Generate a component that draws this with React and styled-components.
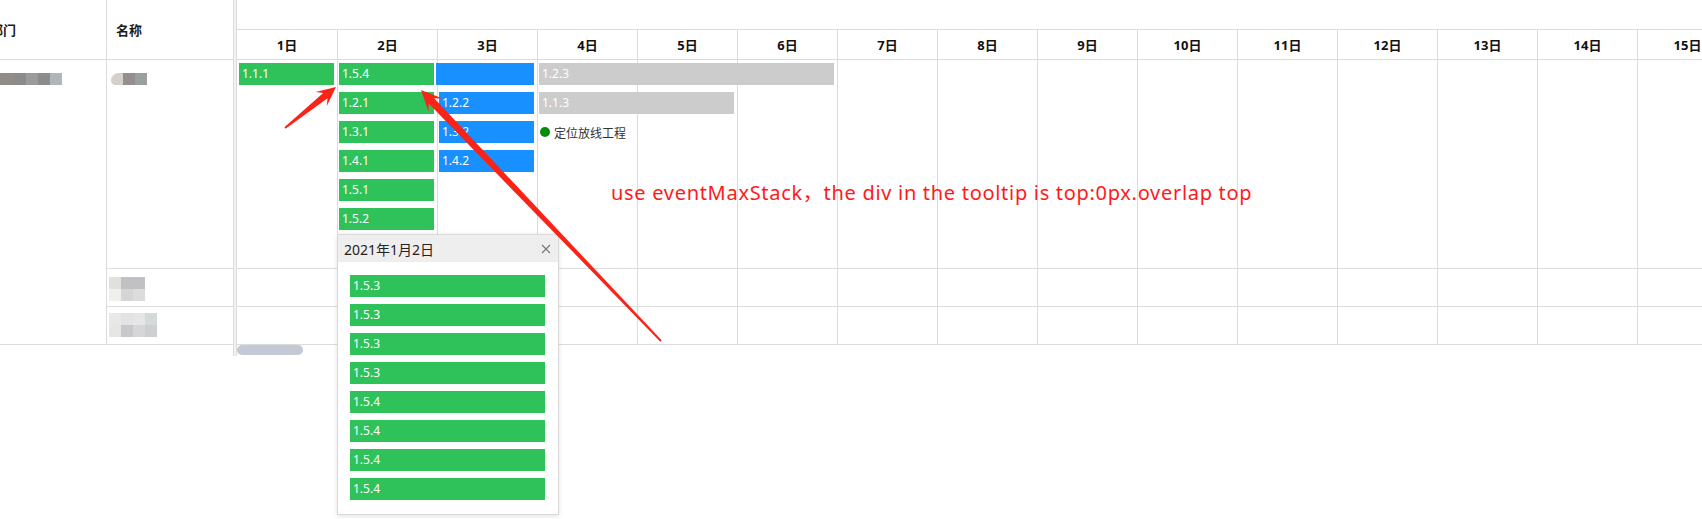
import React from "react";
import styled, { createGlobalStyle } from "styled-components";

const LINE = "#dcdcdc";
const GREEN = "#2fc25b";
const BLUE = "#1890ff";
const GRAY = "#cccccc";

const GlobalStyle = createGlobalStyle`
  html, body { margin: 0; padding: 0; background: #fff; }
  body { font-family: "Noto Sans", "Noto Sans CJK SC", sans-serif; color: #333; }
  *, *::before, *::after { box-sizing: border-box; }
`;

const Page = styled.div`
  position: relative;
  width: 1702px;
  height: 519px;
  overflow: hidden;
  background: #fff;
`;

const Table = styled.div`
  display: flex;
  align-items: flex-start;
`;

const LeftPanel = styled.div`
  flex: none;
  margin-left: -19px;
  display: grid;
  grid-template-columns: 126px 126px;
  grid-template-rows: 60px 209px 38px 38px;
`;

const LeftCell = styled.div`
  border-bottom: 1px solid ${LINE};
  border-right: ${(p) => (p.$last ? "none" : `1px solid ${LINE}`)};
`;

const HeadCell = styled(LeftCell)`
  display: flex;
  align-items: center;
  padding-left: 9px;
  font-size: 13px;
  font-weight: 700;
  color: #1a1a1a;
  font-family: "Noto Sans CJK SC", sans-serif;
`;

const DeptCell = styled(LeftCell)`
  grid-row: 2 / span 3;
  grid-column: 1;
  padding: 13px 0 0 9px;
`;

const NameCell = styled(LeftCell)`
  grid-column: 2;
  display: flex;
  align-items: flex-start;
  padding: ${(p) => p.$pad};
`;

const Mosaic = styled.div`
  display: grid;
  grid-template-columns: repeat(${(p) => p.$cols}, 12px);
  grid-auto-rows: 12px;
  filter: blur(0.3px);
`;

const Block = styled.span`
  background: ${(p) => p.$c};
  border-top-left-radius: ${(p) => (p.$round ? "10px" : "0")};
  border-bottom-left-radius: ${(p) => (p.$round ? "6px" : "0")};
`;

const Separator = styled.div`
  flex: none;
  width: 4px;
  height: 356px;
  border-left: 1px solid ${LINE};
  border-right: 1px solid ${LINE};
  background: #f1f1f1;
`;

const RightPanel = styled.div`
  flex: 1;
  min-width: 0;
  overflow: hidden;
`;

const MonthRow = styled.div`
  height: 30px;
  border-bottom: 1px solid ${LINE};
`;

const DayGrid = styled.div`
  position: relative;
  display: grid;
  grid-template-columns: repeat(15, 100px);
  height: ${(p) => p.$h}px;
  border-bottom: 1px solid ${LINE};
`;

const DayCell = styled.div`
  border-left: 1px solid ${LINE};
  &:first-child {
    border-left: none;
  }
`;

const DayHead = styled(DayCell)`
  display: flex;
  align-items: center;
  justify-content: center;
  font-size: 13px;
  font-weight: 700;
  color: #111;
  font-family: "Noto Sans", "Noto Sans CJK SC", sans-serif;
`;

const EventLayer = styled.div`
  position: absolute;
  top: 3px;
  left: 0;
  display: grid;
  grid-template-columns: repeat(15, 100px);
  grid-auto-rows: 22px;
  row-gap: 7px;
`;

const Bar = styled.div`
  grid-column: ${(p) => p.$col} / span ${(p) => p.$span || 1};
  grid-row: ${(p) => p.$row};
  margin-left: ${(p) => (p.$shift != null ? p.$shift : 2)}px;
  margin-right: 3px;
  background: ${(p) => p.$bg};
  color: #fff;
  font-size: 12px;
  line-height: 22px;
  padding-left: 3px;
  white-space: nowrap;
  overflow: hidden;
`;

const DotItem = styled.div`
  grid-column: ${(p) => p.$col} / span 2;
  grid-row: ${(p) => p.$row};
  display: flex;
  align-items: center;
  gap: 4px;
  padding-left: 3px;
  font-size: 12px;
  color: #333;
  font-family: "Noto Sans CJK SC", sans-serif;
  white-space: nowrap;
`;

const Dot = styled.span`
  width: 10px;
  height: 10px;
  border-radius: 50%;
  background: #0a8a0a;
  flex: none;
`;

const ScrollTrack = styled.div`
  height: 11px;
`;

const Thumb = styled.div`
  width: 66px;
  height: 10px;
  border-radius: 5px;
  background: #c3cad5;
`;

const Popup = styled.div`
  position: absolute;
  left: 337px;
  top: 234px;
  width: 222px;
  background: #fff;
  border: 1px solid #dadada;
  box-shadow: 0 1px 5px rgba(0, 0, 0, 0.12);
`;

const PopupHead = styled.div`
  height: 27px;
  background: #eeeeee;
  display: flex;
  align-items: center;
  justify-content: space-between;
  padding: 0 7px 0 6px;
  font-size: 14px;
  color: #222;
  font-family: "Noto Sans", "Noto Sans CJK SC", sans-serif;
`;

const CloseIcon = styled.svg`
  width: 10px;
  height: 10px;
  display: block;
`;

const PopupBody = styled.div`
  display: flex;
  flex-direction: column;
  gap: 7px;
  padding: 13px 13px 14px 12px;
`;

const PopupBar = styled.div`
  height: 22px;
  background: ${GREEN};
  color: #fff;
  font-size: 12px;
  line-height: 22px;
  padding-left: 3px;
`;

const Note = styled.div`
  position: absolute;
  left: 611px;
  top: 181px;
  font-size: 20px;
  letter-spacing: 0.7px;
  line-height: 24px;
  color: #ff1a1a;
  white-space: nowrap;
  font-family: "Noto Sans", "Noto Sans CJK SC", sans-serif;
`;

const Overlay = styled.svg`
  position: absolute;
  left: 0;
  top: 0;
  width: 1702px;
  height: 519px;
  pointer-events: none;
`;

function arrowPoints(tx, ty, px, py, H, W, w, t) {
  const dx = px - tx;
  const dy = py - ty;
  const L = Math.hypot(dx, dy);
  const ux = dx / L;
  const uy = dy / L;
  const nx = -uy;
  const ny = ux;
  const bx = px - ux * H;
  const by = py - uy * H;
  const kx = px - ux * H * 0.72;
  const ky = py - uy * H * 0.72;
  const pts = [
    [tx + nx * t, ty + ny * t],
    [kx + nx * w, ky + ny * w],
    [bx + nx * W, by + ny * W],
    [px, py],
    [bx - nx * W, by - ny * W],
    [kx - nx * w, ky - ny * w],
    [tx - nx * t, ty - ny * t],
  ];
  return pts.map((p) => p.map((v) => v.toFixed(1)).join(",")).join(" ");
}

const days = Array.from({ length: 15 }, (_, i) => `${i + 1}日`);

const events = [
  { col: 1, row: 1, bg: GREEN, label: "1.1.1" },
  { col: 2, row: 1, bg: GREEN, label: "1.5.4" },
  { col: 2, row: 2, bg: GREEN, label: "1.2.1" },
  { col: 2, row: 3, bg: GREEN, label: "1.3.1" },
  { col: 2, row: 4, bg: GREEN, label: "1.4.1" },
  { col: 2, row: 5, bg: GREEN, label: "1.5.1" },
  { col: 2, row: 6, bg: GREEN, label: "1.5.2" },
  { col: 3, row: 1, bg: BLUE, label: "", shift: -1 },
  { col: 3, row: 2, bg: BLUE, label: "1.2.2" },
  { col: 3, row: 3, bg: BLUE, label: "1.3.2" },
  { col: 3, row: 4, bg: BLUE, label: "1.4.2" },
  { col: 4, row: 1, span: 3, bg: GRAY, label: "1.2.3" },
  { col: 4, row: 2, span: 2, bg: GRAY, label: "1.1.3" },
];

const popupItems = ["1.5.3", "1.5.3", "1.5.3", "1.5.3", "1.5.4", "1.5.4", "1.5.4", "1.5.4"];

const mosaicDept = [["#8f8c8a", "#8f8c8a", "#8d8a88", "#9a9c9c", "#8c8c8c", "#b0b6b8"]];
const mosaicName1 = [["#d3d1ca", "#948f8e", "#9a9fa0"]];
const mosaicName2 = [
  ["#e0e0dd", "#c1c0c2", "#c1c0c2"],
  ["#efefeb", "#d5d5d7", "#dcdcdc"],
];
const mosaicName3 = [
  ["#e8e8e6", "#e3e3e3", "#e6e6e6", "#d6d9d9"],
  ["#e6e6e4", "#c8c8ca", "#d6d6d8", "#cdd0d0"],
];

function Blur({ data, round }) {
  return (
    <Mosaic $cols={data[0].length}>
      {data.flatMap((r, ri) =>
        r.map((c, ci) => <Block key={`${ri}-${ci}`} $c={c} $round={round && ci === 0 && ri === 0} />)
      )}
    </Mosaic>
  );
}

function DayRow({ h, children }) {
  return (
    <DayGrid $h={h}>
      {days.map((d) => (
        <DayCell key={d} />
      ))}
      {children}
    </DayGrid>
  );
}

export default function App() {
  return (
    <Page>
      <GlobalStyle />
      <Table>
        <LeftPanel>
          <HeadCell>部门</HeadCell>
          <HeadCell $last>名称</HeadCell>
          <DeptCell>
            <Blur data={mosaicDept} />
          </DeptCell>
          <NameCell $last $pad="13px 0 0 4px">
            <Blur data={mosaicName1} round />
          </NameCell>
          <NameCell $last $pad="8px 0 0 2px">
            <Blur data={mosaicName2} />
          </NameCell>
          <NameCell $last $pad="6px 0 0 2px">
            <Blur data={mosaicName3} />
          </NameCell>
        </LeftPanel>
        <Separator />
        <RightPanel>
          <MonthRow />
          <DayGrid $h={30}>
            {days.map((d) => (
              <DayHead key={d}>{d}</DayHead>
            ))}
          </DayGrid>
          <DayRow h={209}>
            <EventLayer>
              {events.map((e, i) => (
                <Bar key={i} $col={e.col} $row={e.row} $span={e.span} $bg={e.bg} $shift={e.shift}>
                  {e.label}
                </Bar>
              ))}
              <DotItem $col={4} $row={3}>
                <Dot />
                定位放线工程
              </DotItem>
            </EventLayer>
          </DayRow>
          <DayRow h={38} />
          <DayRow h={38} />
          <ScrollTrack>
            <Thumb />
          </ScrollTrack>
        </RightPanel>
      </Table>

      <Popup>
        <PopupHead>
          <span>2021年1月2日</span>
          <CloseIcon viewBox="0 0 10 10">
            <path d="M1 1 L9 9 M9 1 L1 9" stroke="#777" strokeWidth="1.1" fill="none" />
          </CloseIcon>
        </PopupHead>
        <PopupBody>
          {popupItems.map((t, i) => (
            <PopupBar key={i}>{t}</PopupBar>
          ))}
        </PopupBody>
      </Popup>

      <Note>use eventMaxStack，the div in the tooltip is top:0px.overlap top</Note>

      <Overlay viewBox="0 0 1702 519">
        <polygon points={arrowPoints(285, 128, 336, 87, 19, 9, 3.4, 1)} fill="#fa2318" />
        <polygon points={arrowPoints(661, 341, 421, 90, 21, 9.5, 3.8, 1)} fill="#fa2318" />
      </Overlay>
    </Page>
  );
}
